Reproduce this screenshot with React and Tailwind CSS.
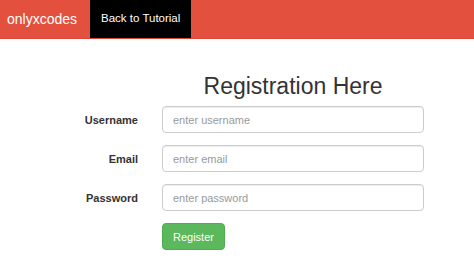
function Field({ label, type, placeholder }) {
    return (
        <>
            <label className="text-right text-[11px] font-bold text-[#333] self-center">{label}</label>
            <input
                type={type}
                placeholder={placeholder}
                className="h-[27px] w-full rounded-[4px] border border-[#ccc] bg-white px-[10px] text-[11px] text-[#555] placeholder:text-[#999] shadow-[inset_0_1px_1px_rgba(0,0,0,0.075)] focus:outline-none"
            />
        </>
    );
}

export default function App() {
    return (
        <div className="min-h-screen bg-white font-['Liberation_Sans',Arial,sans-serif]">
            {/* navbar */}
            <nav className="flex h-[39px] items-stretch bg-[#e4503e] border-b border-[#d8463a]">
                <a className="flex items-center pl-[7px] pr-[13px] text-[14px] text-white">onlyxcodes</a>
                <a className="flex items-center bg-black px-[11px] text-[11.5px] text-white">Back to Tutorial</a>
            </nav>

            <div className="grid grid-cols-[138px_262px] gap-x-6 gap-y-3">
                <div />
                <h2 className="mt-[35px] mb-[-5px] text-center text-[23px] leading-[1.1] text-[#333]">Registration Here</h2>

                <Field label="Username" type="text" placeholder="enter username" />
                <Field label="Email" type="email" placeholder="enter email" />
                <Field label="Password" type="password" placeholder="enter password" />

                <div />
                <div>
                    <button className="h-[27px] rounded-[4px] border border-[#4cae4c] bg-[#5cb85c] px-[10px] text-[11px] text-white">
                        Register
                    </button>
                </div>
            </div>
        </div>
    );
}
